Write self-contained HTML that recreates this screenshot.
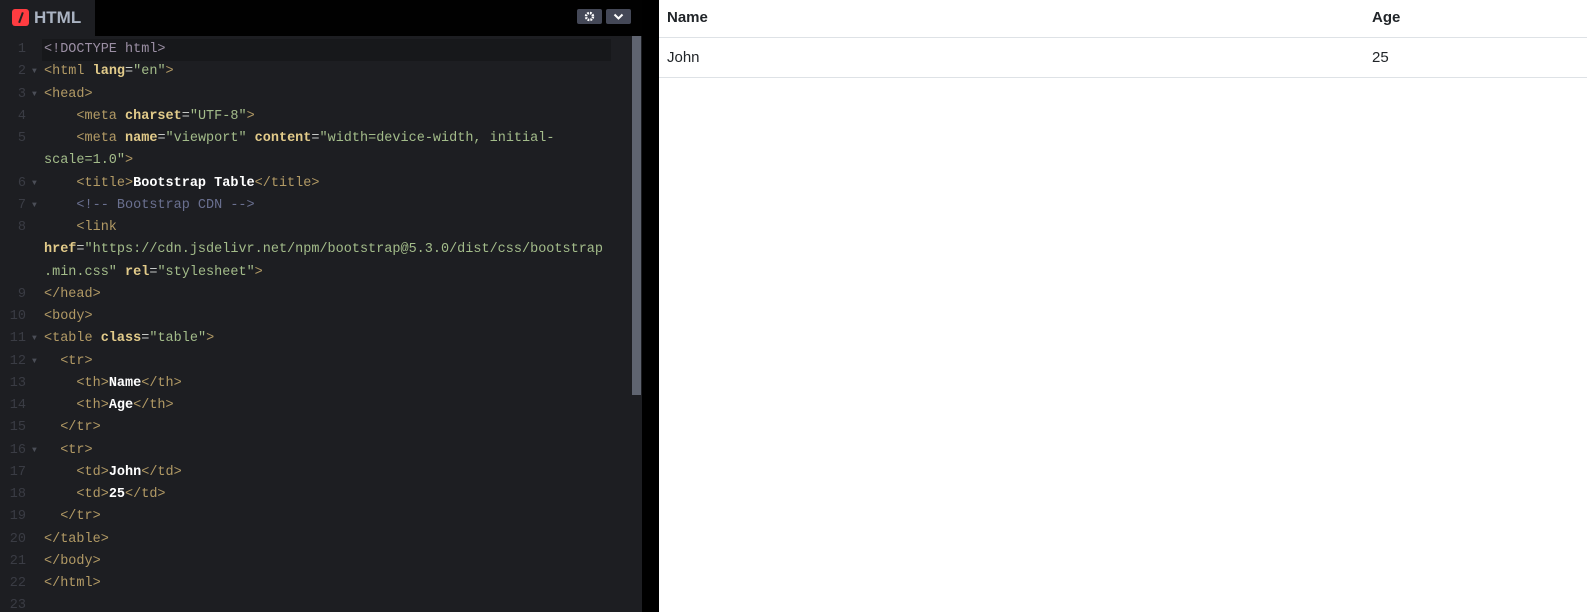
<!DOCTYPE html>
<html style="margin:0;width:1587px;height:612px;overflow:hidden;background:#000"><head><style>
body{margin:0;width:1587px;height:612px;overflow:hidden;background:#000;font-family:"Liberation Sans",sans-serif;position:relative}
.ed{position:absolute;left:0;top:0;width:642px;height:612px;background:#1d1e22}
.hdr{position:absolute;left:0;top:0;width:642px;height:36px;background:#010101}
.tab{position:absolute;left:0;top:0;width:95px;height:36px;background:#1d1e22;color:#aab3c2;font-weight:bold;font-size:17px}
.logo{position:absolute;left:12px;top:9px;width:17px;height:17px;background:#ff3c41;border-radius:3px}
.logo:after{content:"";position:absolute;left:8px;top:3px;width:1.5px;height:11px;background:#222;transform:rotate(20deg)}
.btn{position:absolute;top:9px;height:15px;width:25px;background:#444857;border-radius:2px}
.code{position:absolute;left:0;top:39px;width:630px;height:573px;overflow:hidden;font-family:"Liberation Mono",monospace;font-size:13.5px;color:#c5c8c6}
.r{height:22.25px;line-height:22.25px;white-space:pre;position:relative}
.n{display:inline-block;width:26px;text-align:right;color:#3a3c44;margin-right:18px}
.r.x{padding-left:44px}
.hl{position:absolute;left:42px;top:39px;width:569px;height:22px;background:#17181b}
.t{color:#b29a65}.a{color:#e2cb8a;font-weight:bold}.s{color:#a3bc8a}.w{color:#fff;font-weight:bold}.c{color:#6a7090}.d{color:#9b8fa4}
.f{position:absolute;left:32px;color:#4b4e57;font-size:8px}
.sb{position:absolute;left:632px;top:36px;width:9px;height:359px;background:#5f6470}
.pv{position:absolute;left:659px;top:0;width:928px;height:612px;background:#fff;color:#212529;font-size:15px}
.pv div{position:absolute}
</style></head><body>
<div class="ed"></div>
<div class="hdr"></div>
<div class="tab"><div class="logo"></div><span style="position:absolute;left:34px;top:8px">HTML</span></div>
<div class="btn" style="left:577px"><svg width="25" height="15"><circle cx="12.5" cy="7.5" r="3.5" fill="none" stroke="#fff" stroke-width="2.5" stroke-dasharray="1.8 1"/><circle cx="12.5" cy="7.5" r="1.2" fill="#444857"/></svg></div>
<div class="btn" style="left:606px"><svg width="25" height="15"><path d="M8.5 5.5l4 4 4-4" fill="none" stroke="#fff" stroke-width="2"/></svg></div>
<div class="hl"></div>
<div class="sb"></div>
<div class="code">
<div class="r"><span class="n">1</span><span class="d">&lt;!DOCTYPE html&gt;</span></div>
<div class="r"><span class="n">2</span><span class="t">&lt;html</span> <span class="a">lang</span>=<span class="s">"en"</span><span class="t">&gt;</span><span class="f" style="top:0">▼</span></div>
<div class="r"><span class="n">3</span><span class="t">&lt;head&gt;</span><span class="f">▼</span></div>
<div class="r"><span class="n">4</span>    <span class="t">&lt;meta</span> <span class="a">charset</span>=<span class="s">"UTF-8"</span><span class="t">&gt;</span></div>
<div class="r"><span class="n">5</span>    <span class="t">&lt;meta</span> <span class="a">name</span>=<span class="s">"viewport"</span> <span class="a">content</span>=<span class="s">"width=device-width, initial-</span></div>
<div class="r x"><span class="s">scale=1.0"</span><span class="t">&gt;</span></div>
<div class="r"><span class="n">6</span>    <span class="t">&lt;title&gt;</span><span class="w">Bootstrap Table</span><span class="t">&lt;/title&gt;</span><span class="f">▼</span></div>
<div class="r"><span class="n">7</span>    <span class="c">&lt;!-- Bootstrap CDN --&gt;</span><span class="f">▼</span></div>
<div class="r"><span class="n">8</span>    <span class="t">&lt;link</span></div>
<div class="r x"><span class="a">href</span>=<span class="s">"https://cdn.jsdelivr.net/npm/bootstrap@5.3.0/dist/css/bootstrap</span></div>
<div class="r x"><span class="s">.min.css"</span> <span class="a">rel</span>=<span class="s">"stylesheet"</span><span class="t">&gt;</span></div>
<div class="r"><span class="n">9</span><span class="t">&lt;/head&gt;</span></div>
<div class="r"><span class="n">10</span><span class="t">&lt;body&gt;</span></div>
<div class="r"><span class="n">11</span><span class="t">&lt;table</span> <span class="a">class</span>=<span class="s">"table"</span><span class="t">&gt;</span><span class="f">▼</span></div>
<div class="r"><span class="n">12</span>  <span class="t">&lt;tr&gt;</span><span class="f">▼</span></div>
<div class="r"><span class="n">13</span>    <span class="t">&lt;th&gt;</span><span class="w">Name</span><span class="t">&lt;/th&gt;</span></div>
<div class="r"><span class="n">14</span>    <span class="t">&lt;th&gt;</span><span class="w">Age</span><span class="t">&lt;/th&gt;</span></div>
<div class="r"><span class="n">15</span>  <span class="t">&lt;/tr&gt;</span></div>
<div class="r"><span class="n">16</span>  <span class="t">&lt;tr&gt;</span><span class="f">▼</span></div>
<div class="r"><span class="n">17</span>    <span class="t">&lt;td&gt;</span><span class="w">John</span><span class="t">&lt;/td&gt;</span></div>
<div class="r"><span class="n">18</span>    <span class="t">&lt;td&gt;</span><span class="w">25</span><span class="t">&lt;/td&gt;</span></div>
<div class="r"><span class="n">19</span>  <span class="t">&lt;/tr&gt;</span></div>
<div class="r"><span class="n">20</span><span class="t">&lt;/table&gt;</span></div>
<div class="r"><span class="n">21</span><span class="t">&lt;/body&gt;</span></div>
<div class="r"><span class="n">22</span><span class="t">&lt;/html&gt;</span></div>
<div class="r"><span class="n">23</span></div>
</div>
<div class="pv">
<div style="left:8px;top:9px;font-weight:bold">Name</div>
<div style="left:713px;top:9px;font-weight:bold">Age</div>
<div style="left:0;top:37px;width:928px;height:1px;background:#dee2e6"></div>
<div style="left:8px;top:49px">John</div>
<div style="left:713px;top:49px">25</div>
<div style="left:0;top:77px;width:928px;height:1px;background:#dee2e6"></div>
</div>
</body></html>
